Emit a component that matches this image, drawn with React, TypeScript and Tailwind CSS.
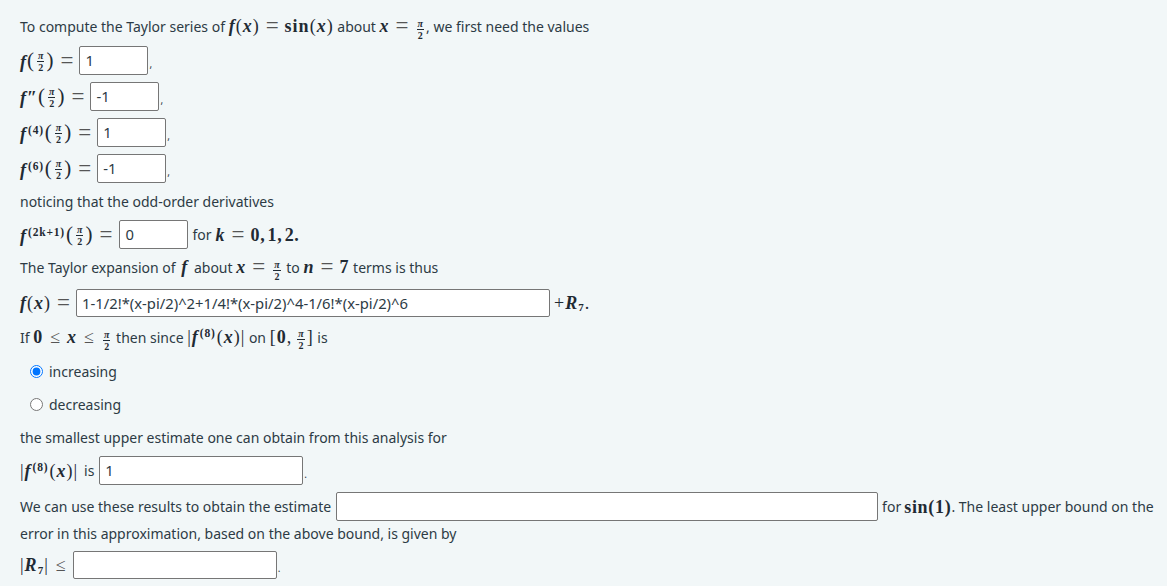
import type { ReactNode } from "react";

const sans = { fontFamily: '"Noto Sans", sans-serif' };

function M({ children }: { children: ReactNode }) {
  return <span className="font-['Liberation_Serif',serif] text-[18px] leading-[20px] tracking-[1px] text-[#1f2a33]">{children}</span>;
}

function V({ children }: { children: ReactNode }) {
  return <i className="font-bold">{children}</i>;
}

function Sup({ children }: { children: ReactNode }) {
  return <sup className="mx-[1px] text-[11.5px] font-bold tracking-[0.8px]">{children}</sup>;
}

function Frac() {
  return (
    <span className="mx-[2px] inline-flex translate-y-[1px] flex-col items-center align-middle font-['Liberation_Serif',serif] text-[10px] font-bold leading-[9px] tracking-normal text-[#1f2a33]">
      <span className="border-b border-[#1f2a33] px-[1px] pb-[1px] italic">π</span>
      <span className="pt-[1px]">2</span>
    </span>
  );
}

function Eq() {
  return <span className="mx-[6px] align-[-1px] text-[23px] font-light leading-[0] tracking-normal text-[#555]">=</span>;
}

function Le() {
  return <span className="mx-[7px] font-normal tracking-normal text-[#555]">≤</span>;
}

function Box({ value, className }: { value?: string; className: string }) {
  return (
    <input
      readOnly
      value={value ?? ""}
      className={`box-border rounded-[2px] border border-[#767676] bg-white px-[5px] pb-[1px] text-[14.8px] text-[#2d3b45] outline-none ${className}`}
    />
  );
}

function Tail({ children }: { children: ReactNode }) {
  return <span className="ml-[1px] self-end pb-[6px] text-[10px] leading-none">{children}</span>;
}

function HalfPi() {
  return (
    <span className="inline-flex items-center">
      <span className="text-[21px] font-normal">(</span>
      <Frac />
      <span className="text-[21px] font-normal">)</span>
    </span>
  );
}

function Deriv({ order }: { order: string }) {
  return (
    <M>
      <V>f</V>
      <Sup>{order}</Sup>
      <HalfPi />
      <Eq />
    </M>
  );
}

function Radio({ label, checked, className }: { label: string; checked?: boolean; className: string }) {
  return (
    <label className={`flex h-[20px] items-center gap-[6px] pl-[10px] ${className}`}>
      <input type="radio" readOnly checked={!!checked} className="m-0 h-[13px] w-[13px]" />
      <span>{label}</span>
    </label>
  );
}

export default function App() {
  return (
    <div style={sans} className="h-[586px] w-[1167px] overflow-hidden bg-[#f2f7f8] pl-[20px] pt-[16px] text-[14px] text-[#2d3b45]">
      <div className="h-[20px] whitespace-pre leading-[22px]">
        To compute the Taylor series of{" "}
        <M>
          <V>f</V>(<V>x</V>)<Eq /><b>sin</b>(<V>x</V>)
        </M>{" "}
        about{" "}
        <M>
          <V>x</V>
          <Eq />
        </M>
        <Frac />, we first need the values
      </div>

      <div className="mt-[10px] flex h-[29px] items-center">
        <M>
          <V>f</V>
          <HalfPi />
          <Eq />
        </M>
        <Box value="1" className="h-[29px] w-[69px]" />
        <Tail>,</Tail>
      </div>
      <div className="mt-[7px] flex h-[29px] items-center">
        <M>
          <V>f</V>
          <V>″</V>
          <HalfPi />
          <Eq />
        </M>
        <Box value="-1" className="h-[29px] w-[69px]" />
        <Tail>,</Tail>
      </div>
      <div className="mt-[7px] flex h-[29px] items-center">
        <Deriv order="(4)" />
        <Box value="1" className="h-[29px] w-[69px]" />
        <Tail>,</Tail>
      </div>
      <div className="mt-[7px] flex h-[29px] items-center">
        <Deriv order="(6)" />
        <Box value="-1" className="h-[29px] w-[69px]" />
        <Tail>,</Tail>
      </div>

      <div className="mt-[8px] h-[20px] leading-[22px]">noticing that the odd-order derivatives</div>

      <div className="mt-[9px] flex h-[29px] items-center">
        <Deriv order="(2k+1)" />
        <Box value="0" className="ml-[1px] h-[29px] w-[69px]" />
        <span className="ml-[4px] mr-[4px]">for</span>
        <M>
          <V>k</V>
          <Eq />
          <b className="tracking-[0.7px] [word-spacing:-3px]">0, 1, 2.</b>
        </M>
      </div>

      <div className="mt-[8px] h-[20px] whitespace-pre leading-[22px]">
        The Taylor expansion of{" "}
        <span className="mx-[2px]">
          <M>
            <V>f</V>
          </M>
        </span>{" "}
        about{" "}
        <M>
          <V>x</V>
          <Eq />
        </M>
        <Frac /> to{" "}
        <M>
          <V>n</V>
          <Eq />
          <b>7</b>
        </M>{" "}
        terms is thus
      </div>

      <div className="mt-[12px] flex h-[28px] items-center">
        <M>
          <V>f</V>(<V>x</V>)
          <Eq />
        </M>
        <Box value="1-1/2!*(x-pi/2)^2+1/4!*(x-pi/2)^4-1/6!*(x-pi/2)^6" className="h-[28px] w-[474px]" />
        <span className="ml-[4px]">
          <M>
            +<V>R</V>
            <sub className="text-[11px] font-bold">7</sub>.
          </M>
        </span>
      </div>

      <div className="mt-[10px] h-[20px] whitespace-pre leading-[22px]">
        If{" "}
        <M>
          <b>0</b>
          <Le />
          <V>x</V>
          <Le />
        </M>
        <Frac /> then since{" "}
        <M>
          |<V>f</V>
          <Sup>(8)</Sup>(<V>x</V>)|
        </M>{" "}
        on{" "}
        <M>
          [<b>0</b>,
          <span className="ml-[3px]">
            <Frac />
          </span>
          ]
        </M>{" "}
        is
      </div>

      <Radio label="increasing" checked className="mt-[14px]" />
      <Radio label="decreasing" className="mt-[13px]" />

      <div className="mt-[13px] h-[20px] leading-[22px]">the smallest upper estimate one can obtain from this analysis for</div>

      <div className="mt-[9px] flex h-[29px] items-center">
        <M>
          |<V>f</V>
          <Sup>(8)</Sup>(<V>x</V>)|
        </M>
        <span className="ml-[6px] mr-[5px]">is</span>
        <Box value="1" className="h-[29px] w-[204px]" />
        <Tail>.</Tail>
      </div>

      <div className="mt-[7px] flex h-[29px] items-center">
        <span className="mr-[5px]">We can use these results to obtain the estimate</span>
        <Box className="h-[29px] w-[542px]" />
        <span className="ml-[4px] mr-[3px]">for</span>
        <M>
          <b className="tracking-[0.7px]">sin(1)</b>
        </M>
        <span>. The least upper bound on the</span>
      </div>

      <div className="mt-[2px] h-[20px] leading-[22px]">error in this approximation, based on the above bound, is given by</div>

      <div className="mt-[8px] flex h-[28px] items-center">
        <M>
          |<V>R</V>
          <sub className="text-[11px] font-bold">7</sub>|
          <Le />
        </M>
        <Box className="h-[28px] w-[204px]" />
        <Tail>.</Tail>
      </div>
    </div>
  );
}
